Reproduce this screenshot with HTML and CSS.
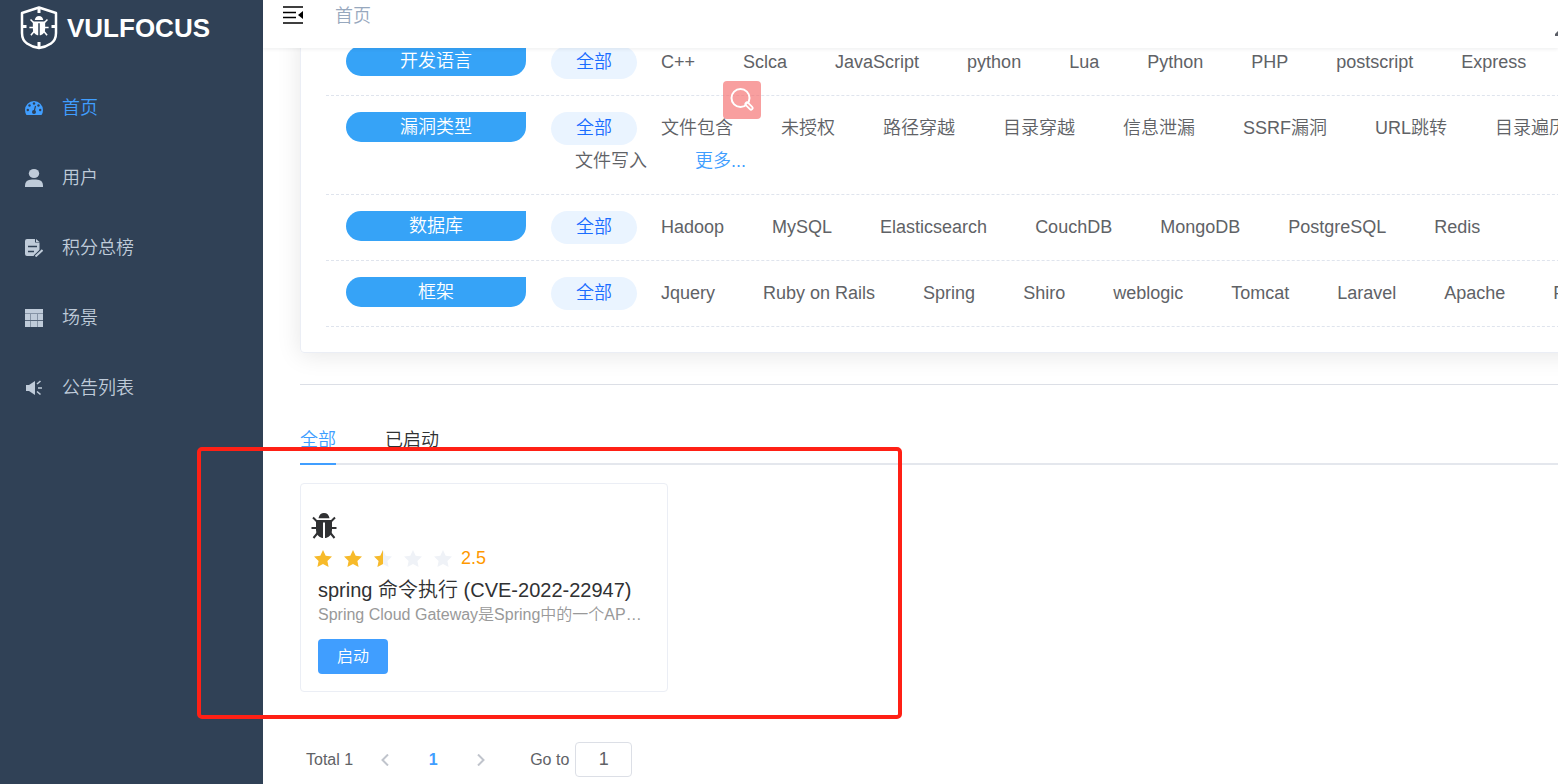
FILE: index.html
```html
<!DOCTYPE html>
<html lang="zh-CN">
  <head>
    <meta charset="utf-8">
    <meta name="viewport" content="width=device-width, initial-scale=1">
    <title>Vulfocus</title>
    <link rel="stylesheet" href="styles.css">
  </head>
  <body>
    <svg class="defs" aria-hidden="true">
      <symbol id="bug" viewBox="0 0 26 26">
        <path d="M7.500 5.300Q8.500 0 13 0t5.500 5.300z" fill="currentColor"/>
        <path d="M5 7h16v10q0 6-6 8h-1V9.500h-2V25h-1q-6-2-6-8z" fill="currentColor"/>
        <path d="M2 4.500L6.500 9M24 4.500L19.500 9M0.500 15H6M20 15h5.500M2.500 25L7 19.500M23.500 25L19 19.500" stroke="currentColor" stroke-width="2" fill="none"/>
      </symbol>
      <symbol id="star" viewBox="0 0 18 18">
        <path d="M9 0l2.700 5.700 6.300.9-4.600 4.300 1.200 6.100L9 14l-5.600 3 1.200-6.100L0 6.600l6.300-.9z" fill="currentColor"/>
      </symbol>
    </svg>
    <div class="app">
      <aside class="sidebar">
        <a href="#" class="logo">
          <svg width="38" height="44" viewBox="0 0 38 44" fill="none" stroke="#fff">
            <path d="M19 1.500L36 7v20q0 7-5 10.500Q26 41 19 42 12 41 7 37.500 2 34 2 27V7z" stroke-width="2.500" stroke-linejoin="round"/>
            <path d="M19 2v5M19 36v6M2 20.500h4.500M31.500 20.500H36" stroke-width="3"/>
            <use href="#bug" x="9" y="10" width="20" height="20" color="#fff" stroke="none"/>
          </svg>
          <span>VULFOCUS</span>
        </a>
        <nav class="menu">
          <a href="#" class="menu-item active">
            <svg width="18" height="18" viewBox="0 0 18 18">
              <path d="M1.500 16A9 9 0 0 1 0 11a9 9 0 0 1 18 0q0 3-1.500 5z" fill="currentColor"/>
              <g fill="#304156"><circle cx="9" cy="4.500" r="1.200"/><circle cx="4.500" cy="6.500" r="1.200"/><circle cx="13.500" cy="6.500" r="1.200"/><circle cx="2.800" cy="11" r="1.200"/><circle cx="15.200" cy="11" r="1.200"/><circle cx="9" cy="13" r="2"/></g>
              <path d="M9 13l1.500-6" stroke="#304156" stroke-width="1.200"/>
            </svg>
            <span>首页</span>
          </a>
          <a href="#" class="menu-item">
            <svg width="18" height="18" viewBox="0 0 18 18" fill="currentColor">
              <ellipse cx="9" cy="4.500" rx="5.200" ry="4.500"/>
              <path d="M0 18v-1.500q0-6 7-6h4q7 0 7 6V18z"/>
            </svg>
            <span>用户</span>
          </a>
          <a href="#" class="menu-item">
            <svg width="18" height="18" viewBox="0 0 18 18">
              <path d="M2 0h8v3.500h4.500V11L9 17H2q-2 0-2-2V2q0-2 2-2z" fill="currentColor"/>
              <path d="M11 0l3.500 3H11z" fill="currentColor"/>
              <path d="M3 7.500h9M3 12.500h6" stroke="#304156" stroke-width="1.600"/>
              <path d="M10 18l7.500-7" stroke="#304156" stroke-width="4"/>
              <path d="M10.500 17.500l7-6.500" stroke="currentColor" stroke-width="2"/>
            </svg>
            <span>积分总榜</span>
          </a>
          <a href="#" class="menu-item">
            <svg width="18" height="18" viewBox="0 0 18 18">
              <path d="M0 0h18v18H0z" fill="currentColor"/>
              <path d="M0 4.500h18M5.500 5v13M12.500 5v13" stroke="#8593a5" stroke-width="1"/>
              <path d="M0 11.500h18" stroke="#566579" stroke-width="1"/>
            </svg>
            <span>场景</span>
          </a>
          <a href="#" class="menu-item">
            <svg width="18" height="18" viewBox="0 0 18 18">
              <path d="M1 6h3l6-4v14l-6-4H1z" fill="currentColor"/>
              <path d="M12 5l3.500-3M13 9h4M12 12.500l3.500 3" stroke="currentColor" stroke-width="1.600"/>
            </svg>
            <span>公告列表</span>
          </a>
        </nav>
      </aside>

      <main class="main">
        <header class="navbar">
          <button type="button" class="hamburger" aria-label="menu">
            <svg width="20" height="18" viewBox="0 0 20 18">
              <path d="M0 1h20M0 6.500h13M0 11.500h13M0 17h20" stroke="#000" stroke-width="1.700"/>
              <path d="M20 5v8l-5-4z"/>
            </svg>
          </button>
          <a href="#" class="crumb">首页</a>
          <svg class="caret" width="10" height="5" viewBox="0 0 10 5"><path d="M0 5V3l3-3h4l3 5z" fill="#5a5e66"/></svg>
        </header>

        <div class="content">
          <section class="filters">
            <div class="filter-row">
              <h2 class="filter-name">开发语言</h2>
              <div class="filter-list">
                <a href="#" class="active">全部</a>
                <a href="#">C++</a>
                <a href="#">Sclca</a>
                <a href="#">JavaScript</a>
                <a href="#">python</a>
                <a href="#">Lua</a>
                <a href="#">Python</a>
                <a href="#">PHP</a>
                <a href="#">postscript</a>
                <a href="#">Express</a>
              </div>
            </div>
            <div class="filter-row">
              <h2 class="filter-name">漏洞类型</h2>
              <div class="filter-list">
                <a href="#" class="active">全部</a>
                <a href="#">文件包含</a>
                <a href="#">未授权</a>
                <a href="#">路径穿越</a>
                <a href="#">目录穿越</a>
                <a href="#">信息泄漏</a>
                <a href="#">SSRF漏洞</a>
                <a href="#">URL跳转</a>
                <a href="#">目录遍历</a>
                <a href="#">文件写入</a>
                <a href="#" class="more">更多...</a>
              </div>
            </div>
            <div class="filter-row">
              <h2 class="filter-name">数据库</h2>
              <div class="filter-list">
                <a href="#" class="active">全部</a>
                <a href="#">Hadoop</a>
                <a href="#">MySQL</a>
                <a href="#">Elasticsearch</a>
                <a href="#">CouchDB</a>
                <a href="#">MongoDB</a>
                <a href="#">PostgreSQL</a>
                <a href="#">Redis</a>
              </div>
            </div>
            <div class="filter-row">
              <h2 class="filter-name">框架</h2>
              <div class="filter-list">
                <a href="#" class="active">全部</a>
                <a href="#">Jquery</a>
                <a href="#">Ruby on Rails</a>
                <a href="#">Spring</a>
                <a href="#">Shiro</a>
                <a href="#">weblogic</a>
                <a href="#">Tomcat</a>
                <a href="#">Laravel</a>
                <a href="#">Apache</a>
                <a href="#">Flask</a>
              </div>
            </div>
          </section>

          <hr class="divider">

          <div class="tabs">
            <a href="#" class="tab active">全部</a>
            <a href="#" class="tab">已启动</a>
          </div>

          <article class="card">
            <svg class="card-bug" width="26" height="26"><use href="#bug"/></svg>
            <div class="rate">
              <svg class="on" width="18" height="18"><use href="#star"/></svg>
              <svg class="on" width="18" height="18"><use href="#star"/></svg>
              <svg width="18" height="18" viewBox="0 0 18 18">
                <use href="#star"/>
                <path class="on" d="M9 0v14l-5.600 3 1.200-6.100L0 6.600l6.300-.9z" fill="currentColor"/>
              </svg>
              <svg width="18" height="18"><use href="#star"/></svg>
              <svg width="18" height="18"><use href="#star"/></svg>
              <span class="score">2.5</span>
            </div>
            <h3 class="card-title">spring 命令执行 (CVE-2022-22947)</h3>
            <p class="card-desc">Spring Cloud Gateway是Spring中的一个API网关</p>
            <button type="button" class="start">启动</button>
          </article>

          <div class="pagination">
            <span class="total">Total 1</span>
            <button type="button" class="page-btn" aria-label="prev">
              <svg width="8" height="12" viewBox="0 0 8 12"><path d="M7 .500L1.500 6 7 11.500" fill="none" stroke="#c0c4cc" stroke-width="2"/></svg>
            </button>
            <button type="button" class="page-btn current">1</button>
            <button type="button" class="page-btn" aria-label="next">
              <svg width="8" height="12" viewBox="0 0 8 12"><path d="M1 .500L6.500 6 1 11.500" fill="none" stroke="#c0c4cc" stroke-width="2"/></svg>
            </button>
            <label class="jump" for="page">Go to</label>
            <input id="page" class="page-input" type="text" value="1">
          </div>
        </div>
      </main>

      <button type="button" class="float-search" aria-label="search">
        <svg width="24" height="24" viewBox="0 0 24 24" fill="none" stroke="#fff">
          <circle cx="10.500" cy="10" r="9" stroke-width="2"/>
          <path d="M17 16l4 4" stroke-width="5" stroke-linecap="round"/>
          <path d="M17.500 16.500l3.500 3.500" stroke="#f9a1a1" stroke-width="1.500" stroke-linecap="round"/>
        </svg>
      </button>
      <div class="highlight"></div>
    </div>
  </body>
</html>
```

FILE: styles.css
```css
* {
    box-sizing: border-box;
}
body {
    margin: 0;
    font: 350 18px/33px "Liberation Sans", "Noto Sans CJK SC", sans-serif;
    color: #303133;
    background: #fff;
}
a {
    color: inherit;
    text-decoration: none;
}
h2, h3, p {
    margin: 0;
    font-weight: 350;
}
button {
    padding: 0;
    border: 0;
    background: none;
    font: inherit;
    cursor: pointer;
}
svg {
    flex: none;
    display: block;
}
.defs {
    position: absolute;
    width: 0;
    height: 0;
}
.app {
    position: relative;
    display: flex;
    min-height: 100vh;
    overflow: hidden;
}

/* sidebar */
.sidebar {
    flex: none;
    width: 263px;
    background: #304156;
    color: #bfcbd9;
}
.logo {
    display: flex;
    gap: 9px;
    height: 73px;
    padding: 6px 20px;
    color: #fff;
    font-size: 26px;
    font-weight: bold;
    line-height: 44px;
}
.menu-item {
    display: flex;
    align-items: center;
    gap: 19px;
    height: 70px;
    padding: 0 25px;
    line-height: 35px;
}
.menu-item.active {
    color: #409eff;
}

/* top bar */
.main {
    flex: 1;
    min-width: 0;
}
.navbar {
    position: relative;
    z-index: 1;
    display: flex;
    height: 48px;
    padding-left: 20px;
    background: #fff;
    box-shadow: 0 1px 4px rgba(0, 21, 41, .08);
}
.hamburger {
    align-self: flex-start;
    padding: 6px 0;
}
.crumb {
    margin-left: 32px;
    color: #97a8be;
}
.caret {
    align-self: flex-end;
    margin: 0 -7px 12px auto;
}

/* the content is wider than the window and scrolled under the bar */
.content {
    width: calc(100% + 128px);
    padding: 0 0 7px 37px;
}
.filters {
    margin-top: -19px;
    padding: 0 25px 25px;
    border: 1px solid #ebeef5;
    border-radius: 4px;
    box-shadow: 0 2px 24px rgba(0, 0, 0, .1);
}
.filter-row {
    display: flex;
    gap: 25px;
    padding: 16px 20px;
    border-bottom: 1px dashed #dfe4ed;
}
.filter-name {
    flex: none;
    width: 180px;
    height: 30px;
    border-radius: 15px 0 15px 15px;
    background: #36a3f7;
    color: #fff;
    font-size: 18px;
    line-height: 30px;
    text-align: center;
}
.filter-list {
    display: flex;
    flex-wrap: wrap;
    color: #606266;
}
.filter-list a {
    padding: 0 24px;
}
.filter-list a.active {
    padding: 0 25px;
    border-radius: 17px;
    background: #eaf4ff;
    color: #1a6dff;
}
.filter-list a.more {
    color: #409eff;
}
.divider {
    height: 1px;
    margin: 31px 0 32px;
    border: 0;
    background: #dcdfe6;
}
.tabs {
    display: flex;
    gap: 49px;
    border-bottom: 2px solid #e4e7ed;
}
.tab {
    height: 48px;
    margin-bottom: -2px;
    padding-top: 7px;
}
.tab.active {
    border-bottom: 2px solid #409eff;
    color: #409eff;
}

/* image card */
.card {
    width: 368px;
    margin-top: 18px;
    padding: 29px 17px 17px;
    border: 1px solid #ebeef5;
    border-radius: 4px;
}
.card-bug {
    margin-left: -7px;
}
.rate {
    display: flex;
    align-items: center;
    gap: 12px;
    height: 36px;
    margin-left: -4px;
    padding-top: 3px;
    color: #eff2f7;
}
.rate .on {
    color: #f7ba2a;
}
.score {
    margin-left: -3px;
    color: #ff9900;
}
.card-title {
    font-size: 20px;
    line-height: 30px;
}
.card-desc {
    overflow: hidden;
    margin-right: 4px;
    color: #999;
    font-size: 16px;
    line-height: 20px;
    text-overflow: ellipsis;
    white-space: nowrap;
}
.start {
    display: block;
    width: 70px;
    height: 35px;
    margin-top: 14px;
    border-radius: 4px;
    background: #409eff;
    color: #fff;
    font-size: 16px;
}

/* pagination */
.pagination {
    display: flex;
    align-items: center;
    margin-top: 50px;
    padding-left: 6px;
    color: #606266;
    font-size: 16px;
}
.page-btn {
    display: flex;
    justify-content: center;
    width: 48px;
}
.total {
    margin-right: 8px;
}
.current {
    color: #409eff;
    font-weight: bold;
}
.jump {
    margin: 0 6px 0 25px;
}
.page-input {
    width: 57px;
    height: 35px;
    border: 1px solid #dcdfe6;
    border-radius: 4px;
    color: #606266;
    font: inherit;
    font-size: 18px;
    text-align: center;
}

/* overlays */
.float-search {
    position: absolute;
    z-index: 2;
    top: 81px;
    left: 723px;
    display: flex;
    align-items: center;
    justify-content: center;
    width: 38px;
    height: 38px;
    border-radius: 4px;
    background: rgba(245, 108, 108, .65);
}
.highlight {
    position: absolute;
    z-index: 2;
    top: 447px;
    left: 197px;
    width: 705px;
    height: 272px;
    border: 4px solid #ff2015;
    border-radius: 5px;
    pointer-events: none;
}
```
